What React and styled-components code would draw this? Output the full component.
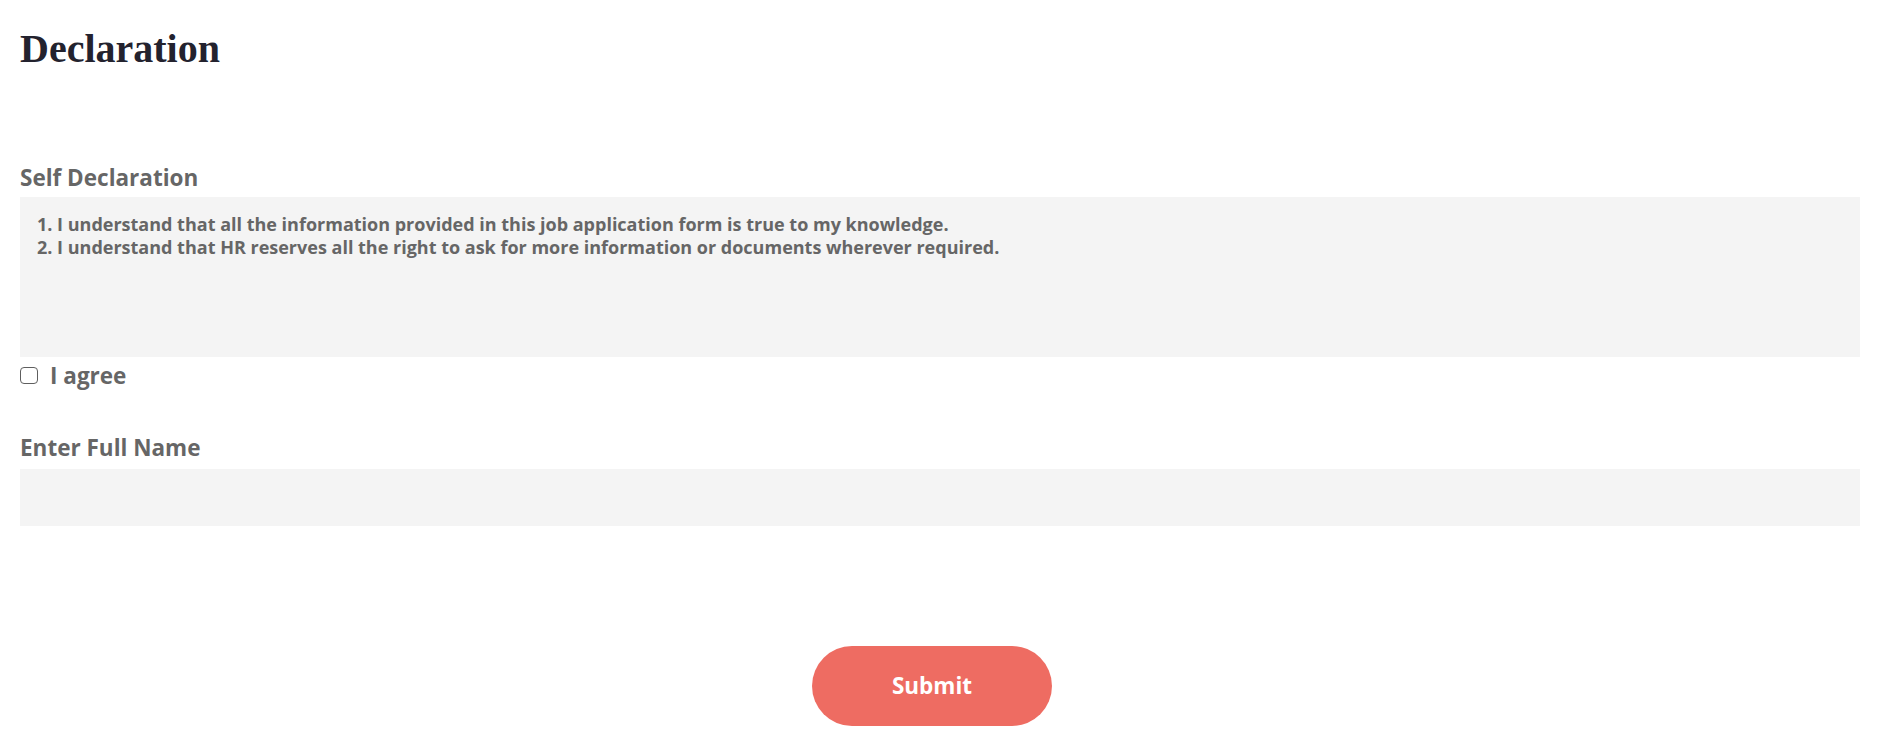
import React, { useState } from "react";
import styled, { createGlobalStyle } from "styled-components";

const GlobalStyle = createGlobalStyle`
  html, body {
    margin: 0;
    padding: 0;
    background: #ffffff;
  }
  * {
    box-sizing: border-box;
  }
`;

const declarationText =
  "1. I understand that all the information provided in this job application form is true to my knowledge.\n2. I understand that HR reserves all the right to ask for more information or documents wherever required.";

const App = () => {
  const [agreed, setAgreed] = useState(false);
  const [name, setName] = useState("");

  return (
    <>
      <GlobalStyle />
      <Page>
        <Title>Declaration</Title>

        <Form onSubmit={e => e.preventDefault()}>
          <Field>
            <Label htmlFor="self-declaration">Self Declaration</Label>
            <DeclarationBox
              id="self-declaration"
              readOnly
              value={declarationText}
            />
          </Field>

          <AgreeRow>
            <Checkbox
              type="checkbox"
              id="agree"
              checked={agreed}
              onChange={e => setAgreed(e.target.checked)}
            />
            <AgreeLabel htmlFor="agree">I agree</AgreeLabel>
          </AgreeRow>

          <Field className="name">
            <Label htmlFor="full-name">Enter Full Name</Label>
            <TextInput
              id="full-name"
              type="text"
              value={name}
              onChange={e => setName(e.target.value)}
            />
          </Field>

          <ButtonRow>
            <SubmitButton type="submit">Submit</SubmitButton>
          </ButtonRow>
        </Form>
      </Page>
    </>
  );
};

export default App;

const Page = styled.div`
  padding: 24px 18px 40px 20px;
  font-family: "Open Sans", "Noto Sans", sans-serif;
`;

const Title = styled.h1`
  margin: 0;
  font-family: "Liberation Serif", "DejaVu Serif", serif;
  font-weight: 700;
  font-size: 40px;
  line-height: 1.25;
  color: #23222e;
`;

const Form = styled.form`
  display: flex;
  flex-direction: column;
  margin-top: 88px;
`;

const Field = styled.div`
  display: flex;
  flex-direction: column;
  gap: 3px;

  &.name {
    margin-top: 41px;
    gap: 5px;
  }
`;

const Label = styled.label`
  font-size: 22.5px;
  font-weight: 700;
  line-height: 1.4;
  color: #666666;
`;

const DeclarationBox = styled.textarea`
  display: block;
  width: 100%;
  height: 160px;
  margin: 0;
  padding: 16px 17px;
  border: none;
  outline: none;
  resize: none;
  background: #f4f4f4;
  font-family: "Open Sans", "Noto Sans", sans-serif;
  font-size: 18px;
  font-weight: 700;
  line-height: 23px;
  color: #666666;
`;

const AgreeRow = styled.div`
  display: flex;
  align-items: center;
  gap: 12px;
  margin-top: 3px;
`;

const Checkbox = styled.input`
  appearance: none;
  position: relative;
  width: 18px;
  height: 17px;
  margin: 0;
  border: 1px solid #5f5f5f;
  border-radius: 4px;
  background: #ffffff;
  cursor: pointer;

  &:checked {
    background: #666666;
  }

  &:checked::after {
    content: "";
    position: absolute;
    left: 5px;
    top: 1px;
    width: 4px;
    height: 9px;
    border: solid #ffffff;
    border-width: 0 2px 2px 0;
    transform: rotate(45deg);
  }
`;

const AgreeLabel = styled.label`
  font-size: 22.5px;
  font-weight: 700;
  line-height: 1.4;
  color: #666666;
  cursor: pointer;
`;

const TextInput = styled.input`
  display: block;
  width: 100%;
  height: 57px;
  margin: 0;
  padding: 0 17px;
  border: none;
  outline: none;
  background: #f4f4f4;
  font-family: "Open Sans", "Noto Sans", sans-serif;
  font-size: 18px;
  color: #444444;
`;

const ButtonRow = styled.div`
  display: flex;
  justify-content: center;
  margin-top: 120px;
  padding-right: 16px;
`;

const SubmitButton = styled.button`
  width: 240px;
  height: 80px;
  border: none;
  border-radius: 40px;
  background: #ee6c62;
  color: #ffffff;
  font-family: "Open Sans", "Noto Sans", sans-serif;
  font-size: 22.5px;
  font-weight: 700;
  cursor: pointer;
`;
